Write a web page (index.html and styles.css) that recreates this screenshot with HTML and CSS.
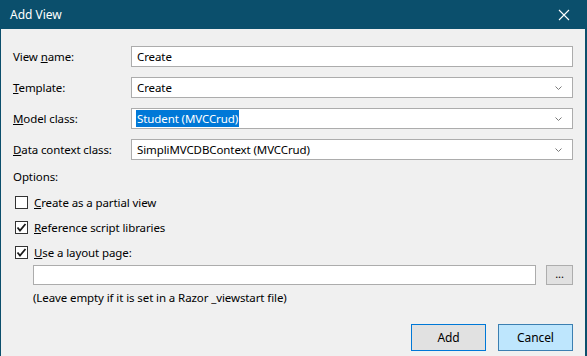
FILE: index.html
```html
<!DOCTYPE html>
<html>
<head>
<meta charset="utf-8">
<link rel="stylesheet" href="styles.css">
</head>
<body>
<div class="window">
  <div class="titlebar">
    <span class="title">Add View</span>
    <svg class="close" width="12" height="12" viewBox="0 0 12 12"><path d="M1 1 L11 11 M11 1 L1 11" stroke="#fff" stroke-width="1.1" fill="none"/></svg>
  </div>
  <div class="content">
    <div class="form">
      <label class="lbl">View <u>n</u>ame:</label>
      <div class="field"><span class="val">Create</span></div>
      <label class="lbl"><u>T</u>emplate:</label>
      <div class="field combo"><span class="val">Create</span><svg class="chev" width="7" height="4" viewBox="0 0 7 4"><path d="M0.5 0.5 L3.5 3.5 L6.5 0.5" stroke="#7a7a7a" stroke-width="1" fill="none"/></svg></div>
      <label class="lbl"><u>M</u>odel class:</label>
      <div class="field combo"><span class="val sel">Student (MVCCrud)</span><svg class="chev" width="7" height="4" viewBox="0 0 7 4"><path d="M0.5 0.5 L3.5 3.5 L6.5 0.5" stroke="#7a7a7a" stroke-width="1" fill="none"/></svg></div>
      <label class="lbl"><u>D</u>ata context class:</label>
      <div class="field combo"><span class="val">SimpliMVCDBContext (MVCCrud)</span><svg class="chev" width="7" height="4" viewBox="0 0 7 4"><path d="M0.5 0.5 L3.5 3.5 L6.5 0.5" stroke="#7a7a7a" stroke-width="1" fill="none"/></svg></div>
    </div>
    <div class="options">Options:</div>
    <div class="checks">
      <div class="check"><span class="box"></span><span><u>C</u>reate as a partial view</span></div>
      <div class="check"><span class="box"><svg width="11" height="11" viewBox="0 0 11 11"><path d="M1.5 5.5 L4 8.5 L9.5 2" stroke="#1a1a1a" stroke-width="1.8" fill="none"/></svg></span><span><u>R</u>eference script libraries</span></div>
      <div class="check"><span class="box"><svg width="11" height="11" viewBox="0 0 11 11"><path d="M1.5 5.5 L4 8.5 L9.5 2" stroke="#1a1a1a" stroke-width="1.8" fill="none"/></svg></span><span><u>U</u>se a layout page:</span></div>
    </div>
    <div class="layout">
      <div class="field wide"></div>
      <div class="browse">...</div>
    </div>
    <div class="note">(Leave empty if it is set in a Razor _viewstart file)</div>
    <div class="buttons">
      <div class="btn add">Add</div>
      <div class="btn cancel">Cancel</div>
    </div>
  </div>
</div>
</body>
</html>
```

FILE: styles.css
```css
* { box-sizing: border-box; }
html, body { margin: 0; padding: 0; }
body {
  width: 587px;
  height: 356px;
  overflow: hidden;
  font-family: "Noto Sans", "Open Sans", sans-serif;
  font-size: 11.5px;
  letter-spacing: -0.1px;
  color: #000;
  background: #f0f0f0;
}
.window {
  width: 587px;
  height: 356px;
  border-left: 1px solid #0b4f6c;
  border-right: 2px solid #0b4f6c;
  background: #f0f0f0;
  display: flex;
  flex-direction: column;
}
.titlebar {
  height: 29px;
  background: #0b4f6c;
  color: #fff;
  display: flex;
  align-items: center;
  justify-content: space-between;
  padding: 0 15px 0 9px;
}
.title { font-size: 12px; letter-spacing: 0; }
.close { display: block; }
.content {
  padding: 17px 12px 0 12px;
  display: flex;
  flex-direction: column;
}
.form {
  display: grid;
  grid-template-columns: 118px 1fr;
  grid-auto-rows: 21px;
  row-gap: 10px;
  align-items: center;
}
.lbl { line-height: 16px; }
.field {
  height: 21px;
  background: #fff;
  border: 1px solid #acacac;
  display: flex;
  align-items: center;
  padding-left: 4px;
}
.combo { padding-right: 10px; justify-content: space-between; }
.val { line-height: 17px; padding: 0 1px; }
.val.sel { background: #0078d7; color: #fff; }
.chev { display: block; }
.options { margin-top: 9px; line-height: 16px; }
.checks {
  margin-top: 11px;
  display: flex;
  flex-direction: column;
  gap: 12px;
}
.check {
  display: flex;
  align-items: center;
  height: 13px;
  padding-left: 2px;
}
.box {
  width: 13px;
  height: 13px;
  border: 1px solid #333;
  background: #fff;
  margin-right: 6px;
  display: flex;
  align-items: center;
  justify-content: center;
}
.box svg { display: block; }
.layout {
  margin-top: 6px;
  padding-left: 20px;
  display: flex;
  gap: 10px;
}
.wide { flex: 1; height: 20px; }
.browse {
  width: 27px;
  height: 20px;
  background: #e1e1e1;
  border: 1px solid #adadad;
  display: flex;
  align-items: center;
  justify-content: center;
  font-size: 11px;
  line-height: 12px;
  padding-bottom: 3px;
}
.note {
  margin-top: 5px;
  padding-left: 20px;
  line-height: 16px;
}
.buttons {
  margin-top: 18px;
  display: flex;
  justify-content: flex-end;
  gap: 12px;
}
.btn {
  width: 75px;
  height: 27px;
  display: flex;
  align-items: center;
  justify-content: center;
  font-size: 12px;
}
.add { background: #e1e1e1; border: 1px solid #0078d7; }
.cancel { background: #bee6fd; border: 1px solid #3c7fb1; }
```
